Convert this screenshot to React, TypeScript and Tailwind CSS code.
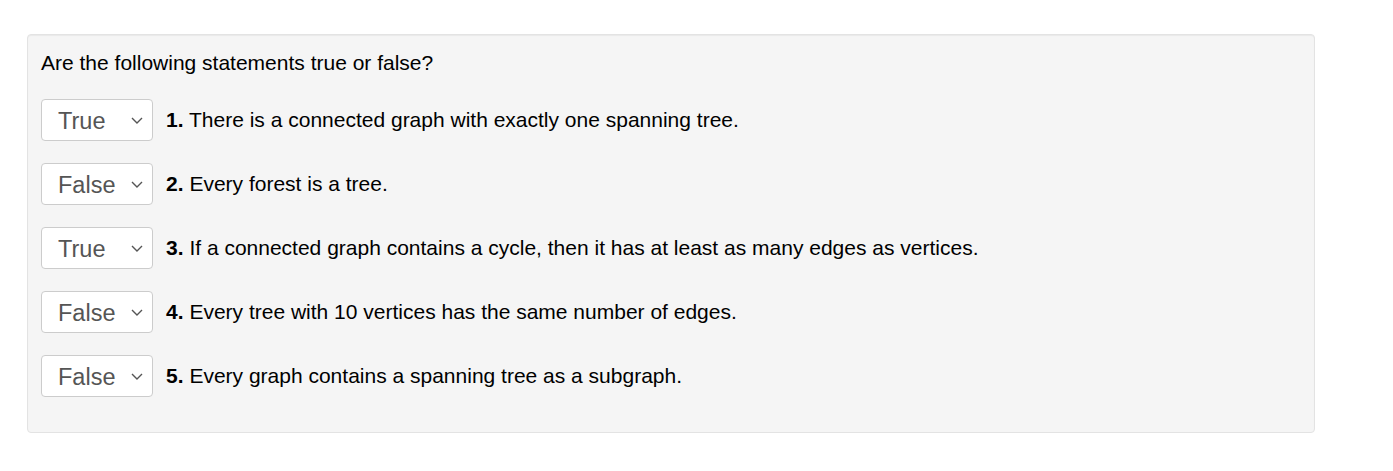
const statements: { answer: string; text: string }[] = [
  { answer: "True", text: "There is a connected graph with exactly one spanning tree." },
  { answer: "False", text: "Every forest is a tree." },
  { answer: "True", text: "If a connected graph contains a cycle, then it has at least as many edges as vertices." },
  { answer: "False", text: "Every tree with 10 vertices has the same number of edges." },
  { answer: "False", text: "Every graph contains a spanning tree as a subgraph." },
];

function AnswerSelect({ value }: { value: string }) {
  return (
    <div className="relative h-[42px] w-[112px] shrink-0">
      <select
        defaultValue={value}
        className="h-full w-full appearance-none rounded-[4px] border border-[#cccccc] bg-white pl-[16px] pt-[4px] text-[23.5px] text-[#555555] outline-none"
      >
        <option>True</option>
        <option>False</option>
      </select>
      <svg
        className="pointer-events-none absolute right-[10px] top-[18px]"
        width="12"
        height="7"
        viewBox="0 0 12 7"
        fill="none"
      >
        <path d="M1 1l5 5 5-5" stroke="#555" strokeWidth="1.4" />
      </svg>
    </div>
  );
}

export default function App() {
  return (
    <div className="min-h-screen bg-white pl-[27px] pt-[34px] font-['Liberation_Sans',Arial,sans-serif]">
      <div className="w-[1288px] rounded-[4px] border border-[#e3e3e3] bg-[#f5f5f5] px-[13px] pb-[35px] pt-[15px] shadow-[inset_0_1px_1px_rgba(0,0,0,0.05)]">
        <p className="text-[21px] leading-[26px] text-black">Are the following statements true or false?</p>
        <div className="mt-[23px] flex flex-col gap-[22px]">
          {statements.map((s, i) => (
            <div key={i} className="flex items-center gap-[13px]">
              <AnswerSelect value={s.answer} />
              <p className="text-[21px] leading-[26px] text-black">
                <span className="font-bold">{i + 1}.</span> {s.text}
              </p>
            </div>
          ))}
        </div>
      </div>
    </div>
  );
}
